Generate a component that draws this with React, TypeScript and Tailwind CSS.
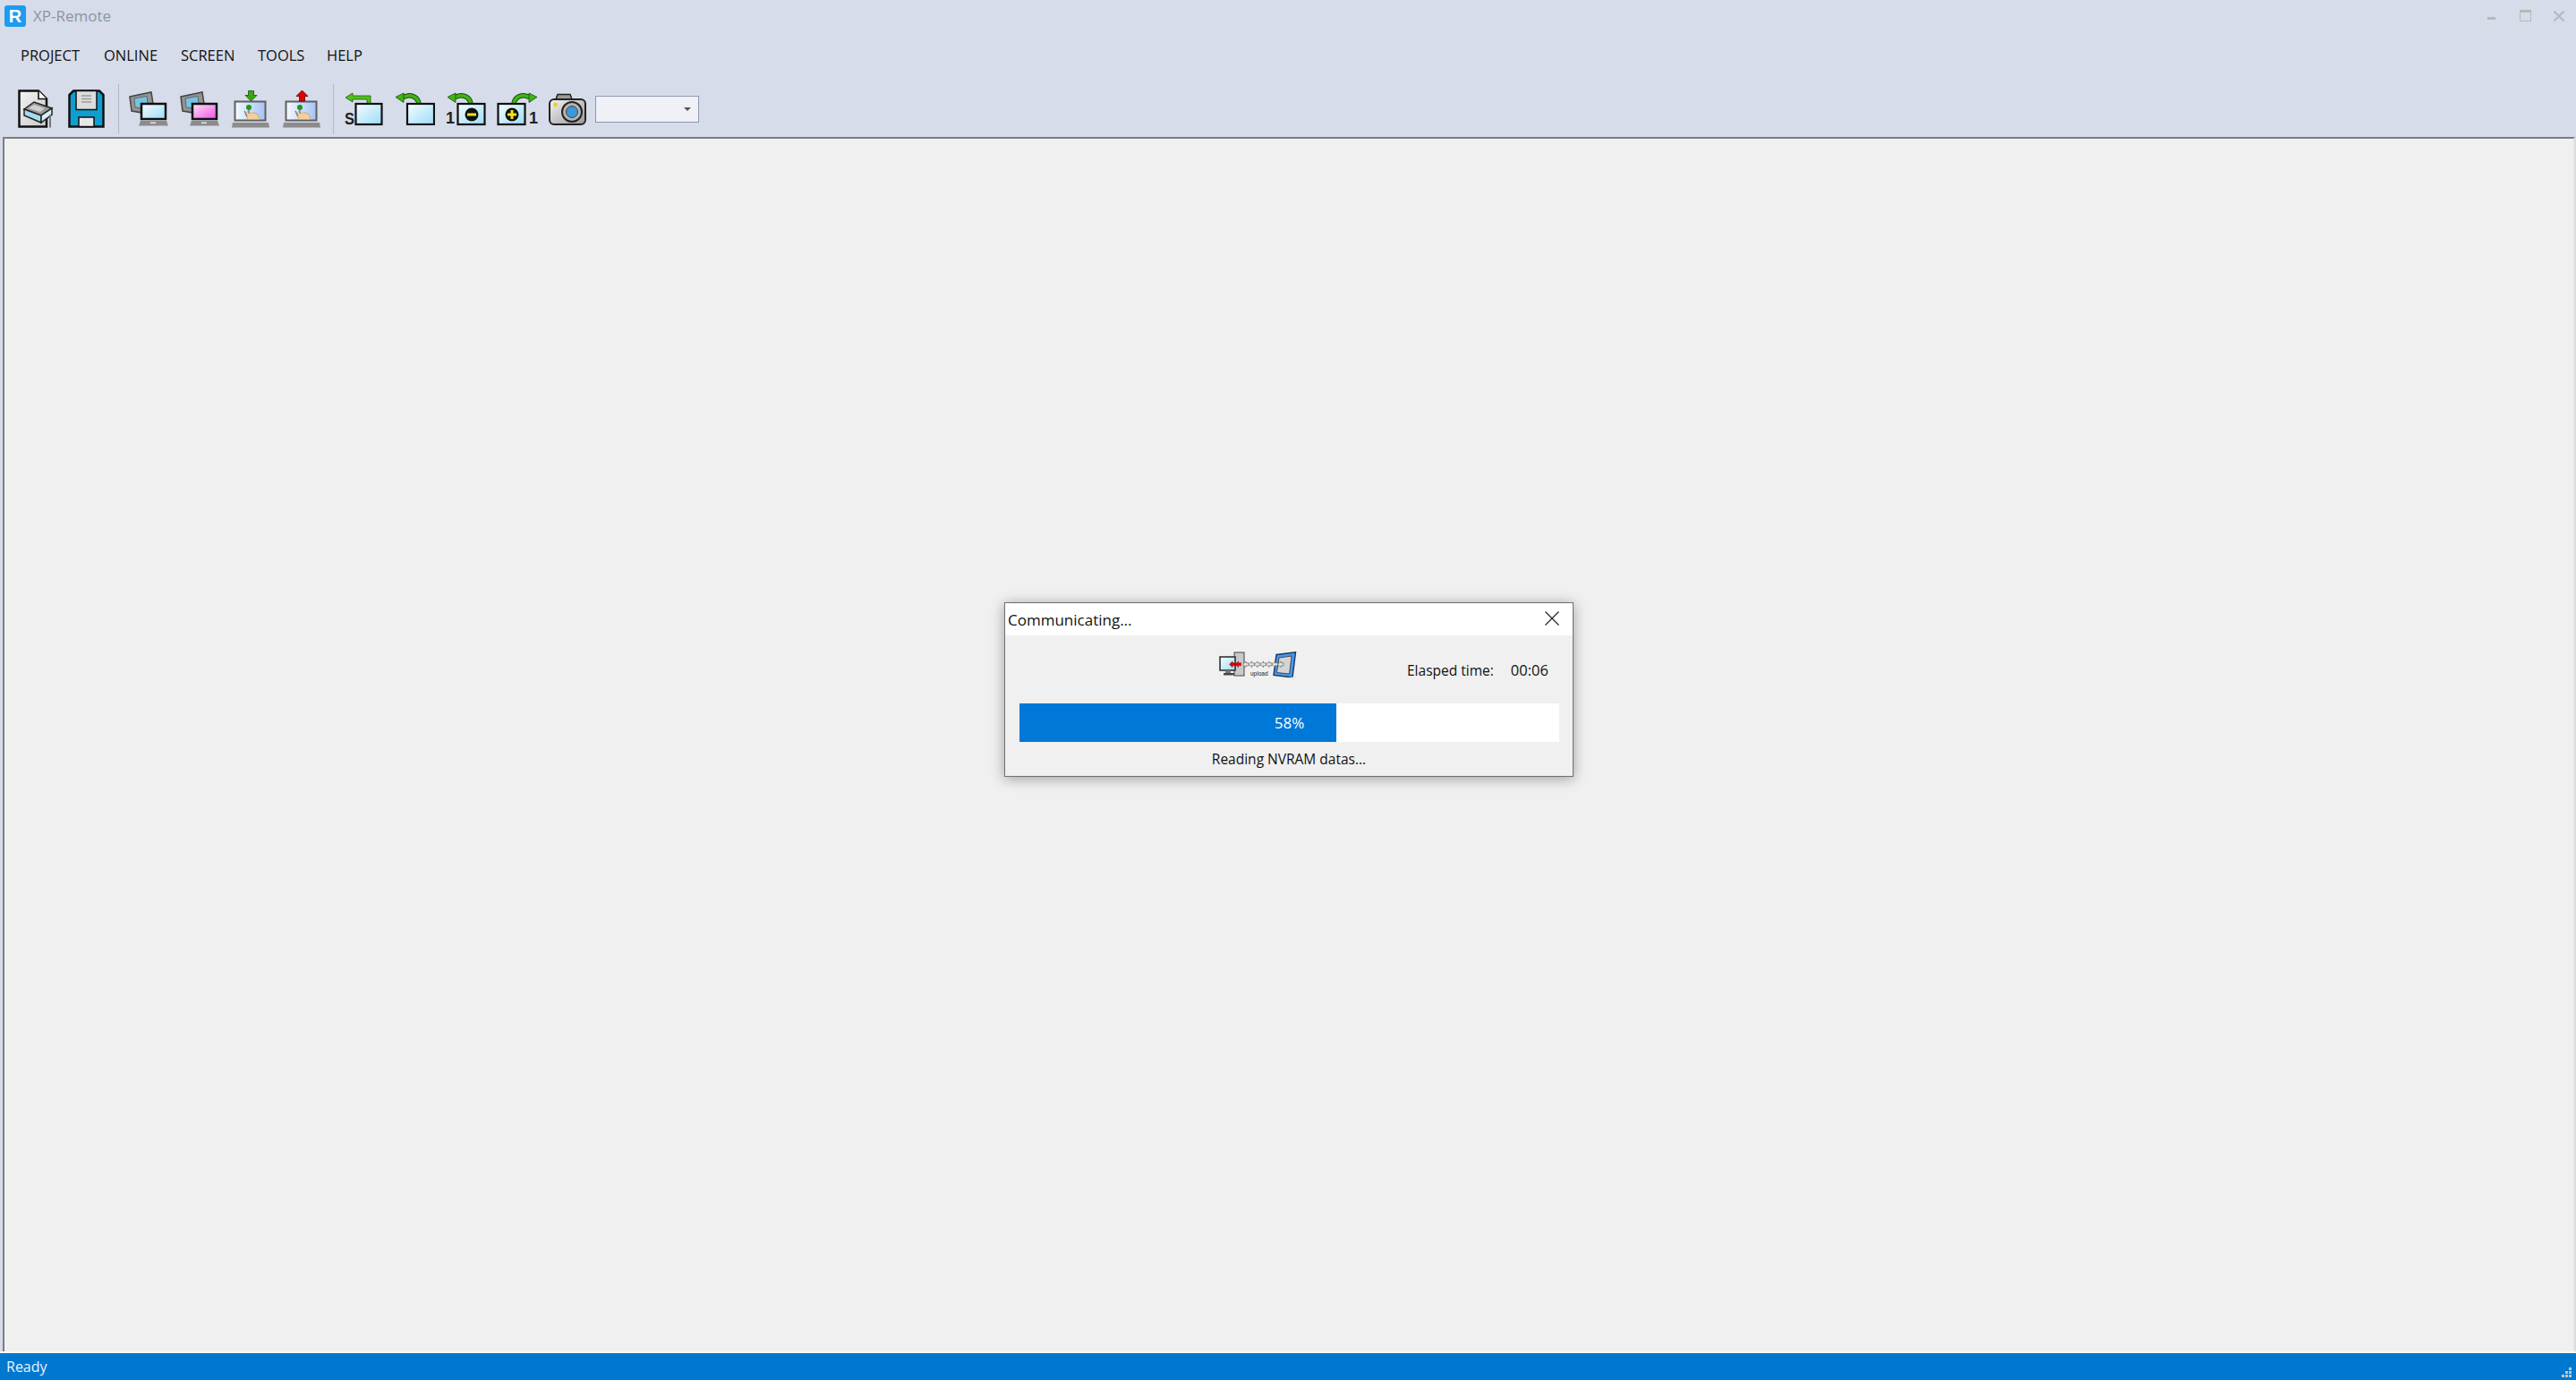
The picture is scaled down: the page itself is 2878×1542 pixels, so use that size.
const MENUS = [
  { label: "PROJECT", cls: "ml-[23px] w-[93px]" },
  { label: "ONLINE", cls: "w-[86px]" },
  { label: "SCREEN", cls: "w-[86px]" },
  { label: "TOOLS", cls: "w-[77px]" },
  { label: "HELP", cls: "w-[60px]" },
]

function Defs() {
  return (
    <svg width="0" height="0" className="absolute">
      <defs>
        <linearGradient id="scr" x1="0" y1="0" x2="1" y2="1">
          <stop offset="0" stopColor="#f8fdff" />
          <stop offset="1" stopColor="#9adcf6" />
        </linearGradient>
        <linearGradient id="pink" x1="0" y1="0" x2="1" y2="1">
          <stop offset="0" stopColor="#fbe4fb" />
          <stop offset="1" stopColor="#f04fe0" />
        </linearGradient>
        <linearGradient id="touch" x1="0" y1="0" x2="1" y2="0">
          <stop offset="0" stopColor="#f6f9ff" />
          <stop offset="1" stopColor="#a5c3f6" />
        </linearGradient>
        <linearGradient id="metal" x1="0" y1="0" x2="1" y2="1">
          <stop offset="0" stopColor="#f4f4f4" />
          <stop offset="1" stopColor="#979797" />
        </linearGradient>
        <linearGradient id="page" x1="0" y1="0" x2="1" y2="1">
          <stop offset="0" stopColor="#f4f4f4" />
          <stop offset="1" stopColor="#c8c8c8" />
        </linearGradient>
      </defs>
    </svg>
  )
}

function ProjectIcon() {
  return (
    <svg width="41" height="43" viewBox="0 0 41 43" className="shrink-0">
      <path d="M1.5 1.5H23L32 10.5V41.5H1.5Z" fill="url(#page)" stroke="#111" strokeWidth="2.5" />
      <path d="M23 1.5V10.5H32" fill="#fff" stroke="#111" strokeWidth="1.6" />
      <path d="M7 22L18 14L38 21L26 29Z" fill="#9a9a9a" stroke="#222" strokeWidth="1.5" />
      <path d="M7 22V29L26 37V29Z" fill="#9fdcf0" stroke="#222" strokeWidth="1.5" />
      <path d="M26 29V37L38 28V21Z" fill="#d8eef6" stroke="#222" strokeWidth="1.5" />
      <path d="M12 21L18 17L30 21L25 25Z" fill="#cfcfcf" />
      <path d="M36 28V42.5" stroke="#777" strokeWidth="2" />
    </svg>
  )
}

function FloppyIcon() {
  return (
    <svg width="41" height="43" viewBox="0 0 41 43" className="ml-[15px] shrink-0">
      <path d="M6 1.5H35L39.5 6V41.5H1.5V6Z" fill="#0e9fd0" stroke="#111" strokeWidth="2.5" />
      <rect x="9" y="1.5" width="23" height="21" fill="#dcdcdc" stroke="#111" strokeWidth="1.5" />
      <path d="M15 7H26M15 10.5H26M15 14H26" stroke="#9b9b9b" strokeWidth="1.6" />
      <rect x="12" y="31" width="17" height="10.5" fill="#e8e8e8" stroke="#111" strokeWidth="1.5" />
    </svg>
  )
}

function Separator({ cls }: { cls: string }) {
  return <div className={`h-[56px] w-px shrink-0 bg-[#b4b9c6] ${cls}`} />
}

function RemoteIcon({ fill, cls }: { fill: string; cls: string }) {
  return (
    <svg width="44" height="39" viewBox="0 0 44 39" className={`shrink-0 ${cls}`}>
      <path d="M1 6L25 1L27 14H15V24L3 22Z" fill="#939393" stroke="#444" strokeWidth="1.5" />
      <path d="M6 8L20 5.5L21 14H15V19L7 18Z" fill="#74c4e6" stroke="#666" strokeWidth="1" />
      <rect x="14" y="14" width="27" height="17" fill={fill} stroke="#111" strokeWidth="2.5" />
      <path d="M13 33H42L44 38.5H11Z" fill="#8c8c8c" />
      <rect x="24" y="34.5" width="6" height="1.5" fill="#e5e5e5" />
    </svg>
  )
}

function TouchIcon({ arrow, cls }: { arrow: string; cls: string }) {
  return (
    <svg width="42" height="43" viewBox="0 0 42 43" className={`shrink-0 ${cls}`}>
      <rect x="3.5" y="13.5" width="34" height="21" fill="url(#touch)" stroke="#5f5f5f" strokeWidth="2" />
      <path d="M1 37H41L42 42.5H0Z" fill="#8c8c8c" />
      {arrow === "down" ? (
        <path d="M18.5 1.5H24.5V6.5H28L21.5 13L15 6.5H18.5Z" fill="#3aa70f" stroke="#174d05" strokeWidth="0.8" />
      ) : (
        <path d="M21.5 1L28 7.5H24.5V13H18.5V7.5H15Z" fill="#e30000" stroke="#5b0000" strokeWidth="0.8" />
      )}
      <path d="M18 24L15 27L18 33.5H31L29 27.5L23 25.5L21.5 27Z" fill="#f5cf9b" stroke="#b9a07a" strokeWidth="0.8" />
      <path d="M19 20V27M14 24L17 30" stroke="#777" strokeWidth="1.2" fill="none" />
      <circle cx="19" cy="20" r="3" fill="#1e9a14" />
    </svg>
  )
}

function CurvedArrow({ flip }: { flip?: boolean }) {
  return (
    <g transform={flip ? "translate(46 0) scale(-1 1)" : undefined}>
      <path d="M27 13C26 5 17 1 9 6" fill="none" stroke="#174d05" strokeWidth="5.5" />
      <path d="M27 13C26 5 17 1 9 6" fill="none" stroke="#3fb512" strokeWidth="3.6" />
      <path d="M1 5.5L10 1V11.5Z" fill="#3fb512" stroke="#174d05" strokeWidth="0.8" />
    </g>
  )
}

function SaveScreenIcon() {
  return (
    <svg width="43" height="37" viewBox="0 0 43 37" className="ml-[12px] shrink-0 overflow-visible">
      <path d="M1 6L9 1V4H29V13H25V8H9V11Z" fill="#4fc11c" stroke="#1d5a08" strokeWidth="0.8" />
      <rect x="12.5" y="13" width="29" height="23" fill="url(#scr)" stroke="#111" strokeWidth="2.2" />
      <text x="0" y="36" fontFamily="'Liberation Sans', sans-serif" fontWeight="700" fontSize="18" textLength="11" lengthAdjust="spacingAndGlyphs" fill="#222">S</text>
    </svg>
  )
}

function UndoIcon() {
  return (
    <svg width="45" height="37" viewBox="0 0 45 37" className="ml-[13px] shrink-0">
      <CurvedArrow />
      <rect x="14" y="13" width="30" height="23" fill="url(#scr)" stroke="#111" strokeWidth="2.2" />
    </svg>
  )
}

function MinusOneIcon() {
  return (
    <svg width="44" height="37" viewBox="0 0 44 37" className="ml-[13px] shrink-0 overflow-visible">
      <CurvedArrow />
      <rect x="12.5" y="13" width="30" height="23" fill="url(#scr)" stroke="#111" strokeWidth="2.2" />
      <text x="-1" y="35" fontFamily="'Liberation Sans', sans-serif" fontWeight="700" fontSize="18" fill="#222">1</text>
      <circle cx="28" cy="25" r="7.5" fill="#111" />
      <rect x="23" y="23.5" width="10" height="3" fill="#f3e21e" />
    </svg>
  )
}

function PlusOneIcon() {
  return (
    <svg width="46" height="37" viewBox="0 0 46 37" className="ml-[12px] shrink-0 overflow-visible">
      <CurvedArrow flip />
      <rect x="1.5" y="13" width="30" height="23" fill="url(#scr)" stroke="#111" strokeWidth="2.2" />
      <text x="36" y="35" fontFamily="'Liberation Sans', sans-serif" fontWeight="700" fontSize="18" fill="#222">1</text>
      <circle cx="17" cy="25" r="7.5" fill="#111" />
      <path d="M12 23.5H15.5V20H18.5V23.5H22V26.5H18.5V30H15.5V26.5H12Z" fill="#f3e21e" />
    </svg>
  )
}

function CameraIcon() {
  return (
    <svg width="42" height="36" viewBox="0 0 42 36" className="ml-[12px] shrink-0">
      <path d="M8 7L10 1.5H24L26 7Z" fill="#999" stroke="#222" strokeWidth="1.5" />
      <rect x="1" y="7" width="40" height="28" rx="5" fill="url(#metal)" stroke="#222" strokeWidth="2" />
      <circle cx="26" cy="21" r="11" fill="#b5b5b5" stroke="#222" strokeWidth="2" />
      <circle cx="26" cy="21" r="6.5" fill="#3c97dc" stroke="#444" />
      <circle cx="7.5" cy="13" r="2.4" fill="#e7d21d" />
    </svg>
  )
}

function ChainArrow({ x, red }: { x: number; red?: boolean }) {
  const d = `M${x - 3.5} 14.3L${x} 11V12.8H${x + 3}V15.8H${x}V17.6Z`
  return red ? (
    <path d={d} fill="#e00000" stroke="#a00000" strokeWidth="0.5" />
  ) : (
    <path d={d} fill="#e6e6e6" stroke="#666" strokeWidth="0.7" />
  )
}

function UploadAnimation() {
  const arrows = [30, 36.5, 43, 49.5, 56, 62.5, 69]
  return (
    <svg width="88" height="31" viewBox="0 0 88 31" className="shrink-0">
      <rect x="17" y="1" width="11" height="26" fill="#c9c9c9" stroke="#444" />
      <rect x="1" y="6" width="17" height="15" fill="url(#scr)" stroke="#333" strokeWidth="1.6" />
      <rect x="7" y="21" width="6" height="3" fill="#777" />
      <rect x="5" y="24" width="12" height="2.5" fill="#444" />
      <path d="M64 3.5L85.5 0.8L82 29L61 26.5Z" fill="#4a96e8" stroke="#123a66" strokeWidth="1.4" />
      <path d="M67 7L81 5L78.5 25L64.5 23.5Z" fill="#d4d4d4" stroke="#333" strokeWidth="0.8" />
      <path d="M82.5 28.5L87.5 28L84 30.5H68Z" fill="#e6e6e6" />
      <ChainArrow x={15} red />
      <ChainArrow x={21.5} red />
      {arrows.map((x) => (
        <ChainArrow key={x} x={x} />
      ))}
      <text x="35" y="27" fontFamily="'Liberation Sans', sans-serif" fontSize="6.5" fill="#222">upload</text>
    </svg>
  )
}

function CommunicatingDialog() {
  return (
    <div className="absolute left-[1122px] top-[673px] flex h-[195px] w-[636px] flex-col border border-[#6f6f6f] bg-[#f0f0f0] shadow-[0_2px_14px_rgba(0,0,0,0.35)]">
      <div className="flex h-[36px] shrink-0 items-center justify-between bg-white pl-[3px] pr-[15px]">
        <span className="pt-[2px] text-[17px] leading-[22px] text-[#111]">Communicating...</span>
        <svg width="16" height="16" viewBox="0 0 16 16" className="mb-[2px]">
          <path d="M0.5 0.5L15.5 15.5M15.5 0.5L0.5 15.5" stroke="#222" strokeWidth="1.2" />
        </svg>
      </div>
      <div className="flex h-[76px] shrink-0 items-start pl-[239px] pt-[18px]">
        <UploadAnimation />
        <span className="ml-[122px] mt-[10px] text-[15.5px] leading-[22px] text-[#111]">Elasped time:</span>
        <span className="ml-[19px] mt-[10px] text-[16.5px] leading-[22px] text-[#111]">00:06</span>
      </div>
      <div className="relative ml-[16px] flex h-[43px] w-[603px] shrink-0 bg-white">
        <div className="w-[354px] bg-[#0078d7]" />
        <div className="absolute inset-0 flex items-center justify-center text-[17px] text-white">58%</div>
      </div>
      <div className="mt-[8px] text-center text-[15.5px] leading-[22px] text-[#111]">Reading NVRAM datas...</div>
    </div>
  )
}

export default function App() {
  return (
    <div className="relative flex h-[1542px] w-[2878px] flex-col overflow-hidden bg-[#d6dce9] font-['Open_Sans',sans-serif]">
      <Defs />
      <div className="flex h-[40px] shrink-0 items-center pb-[5px] pl-[5px]">
        <div className="flex h-[24px] w-[24px] items-center justify-center rounded-[3px] bg-[#1e9bf0] font-['Liberation_Sans',sans-serif] text-[20px] font-bold text-white">R</div>
        <span className="ml-[8px] text-[17px] text-[#8c94a8]">XP-Remote</span>
        <div className="ml-auto flex items-center pr-[13px]">
          <div className="mt-[6px] h-[3px] w-[9px] bg-[#b8b8b8]" />
          <div className="ml-[27px] h-[13px] w-[13px] border border-t-[3px] border-[#b8b8b8]" />
          <svg width="12" height="12" viewBox="0 0 12 12" className="ml-[25px]">
            <path d="M0.5 0.5L11.5 11.5M11.5 0.5L0.5 11.5" stroke="#b8b8b8" strokeWidth="2" />
          </svg>
        </div>
      </div>
      <div className="flex h-[44px] shrink-0 items-center pt-[1px] text-[16.5px] text-[#111]">
        {MENUS.map((m) => (
          <span key={m.label} className={m.cls}>{m.label}</span>
        ))}
      </div>
      <div className="flex h-[69px] shrink-0 items-center pl-[20px] pt-[6px]">
        <ProjectIcon />
        <FloppyIcon />
        <Separator cls="ml-[15px]" />
        <RemoteIcon fill="url(#scr)" cls="ml-[11px]" />
        <RemoteIcon fill="url(#pink)" cls="ml-[13px]" />
        <TouchIcon arrow="down" cls="ml-[14px]" />
        <TouchIcon arrow="up" cls="ml-[15px]" />
        <Separator cls="ml-[14px]" />
        <SaveScreenIcon />
        <UndoIcon />
        <MinusOneIcon />
        <PlusOneIcon />
        <CameraIcon />
        <div className="ml-[10px] flex h-[30px] w-[116px] shrink-0 items-center justify-end border border-[#8d97ae] bg-[#eff1f7] pr-[8px]">
          <div className="h-0 w-0 border-x-[4px] border-t-[4px] border-x-transparent border-t-[#555]" />
        </div>
      </div>
      <div className="ml-[3px] mr-[1px] min-h-0 flex-1 border-l-2 border-r-2 border-t-2 border-l-[#7d7d7d] border-r-[#e2e2e2] border-t-[#7d7d7d] bg-[#f0f0f0]" />
      <div className="h-[2px] shrink-0 bg-[#f7f7f7]" />
      <div className="relative flex h-[30px] shrink-0 items-center bg-[#0078d0] pl-[7px] text-[16px] text-[#e8f4ff]">
        Ready
        <div className="absolute bottom-[3px] right-[5px] grid grid-cols-3 gap-[1px]">
          <div />
          <div />
          <div className="h-[3px] w-[3px] bg-[#c4c4c4]" />
          <div />
          <div className="h-[3px] w-[3px] bg-[#c4c4c4]" />
          <div className="h-[3px] w-[3px] bg-[#c4c4c4]" />
          <div className="h-[3px] w-[3px] bg-[#c4c4c4]" />
          <div className="h-[3px] w-[3px] bg-[#c4c4c4]" />
          <div className="h-[3px] w-[3px] bg-[#c4c4c4]" />
        </div>
      </div>
      <CommunicatingDialog />
    </div>
  )
}
